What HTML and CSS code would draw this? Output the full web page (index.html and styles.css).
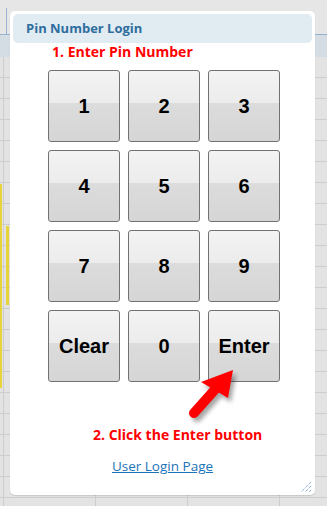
FILE: index.html
```html
<!DOCTYPE html>
<html lang="en">

<head>
    <meta charset="UTF-8">
    <meta name="viewport" content="width=device-width, initial-scale=1.0">
    <title>Pin Number Login</title>
    <link rel="stylesheet" href="styles.css">
</head>

<body>

    <div class="dialog">
        <div class="dialog-title">Pin Number Login</div>

        <div class="step step-one">1. Enter Pin Number</div>

        <div class="keypad">
            <button class="key">1</button>
            <button class="key">2</button>
            <button class="key">3</button>
            <button class="key">4</button>
            <button class="key">5</button>
            <button class="key">6</button>
            <button class="key">7</button>
            <button class="key">8</button>
            <button class="key">9</button>
            <button class="key">Clear</button>
            <button class="key">0</button>
            <button class="key">Enter</button>
        </div>

        <!-- arrow pointing at the enter key -->
        <svg class="arrow" width="70" height="62" viewBox="0 0 70 62">
            <line x1="39" y1="23" x2="14" y2="51" stroke="#ff0000" stroke-width="10" stroke-linecap="round" />
            <polygon points="53,8 21,20 48,36" fill="#ff0000" />
        </svg>

        <div class="step step-two">2. Click the Enter button</div>

        <div class="links">
            <a href="#" class="user-link">User Login Page</a>
        </div>

        <svg class="grip" width="12" height="12" viewBox="0 0 12 12">
            <path d="M11 1 L1 11 M11 5 L5 11 M11 9 L9 11" stroke="#5b8fd0" stroke-width="1" stroke-dasharray="1 1" />
        </svg>
    </div>

</body>

</html>
```

FILE: styles.css
```css
html,
body {
    margin: 0;
    padding: 0;
}

body {
    height: 506px;
    overflow: hidden;
    padding: 11px 12px 0 10px;
    box-sizing: border-box;
    font-family: "Open Sans", "Liberation Sans", sans-serif;
    background-color: #e3e3e3;
    background-image:
        linear-gradient(#e6d43a, #e6d43a),
        linear-gradient(#e6d43a, #e6d43a),
        linear-gradient(#98b3cf, #98b3cf),
        linear-gradient(#98b3cf, #98b3cf),
        linear-gradient(#e6e6e6, #e6e6e6),
        linear-gradient(#d4dce4, #d4dce4),
        linear-gradient(to right, #cdcdcd 1px, transparent 1px),
        linear-gradient(to bottom, transparent 20px, #cdcdcd 20px);
    background-repeat: no-repeat, no-repeat, no-repeat, no-repeat, no-repeat, no-repeat, repeat-x, repeat-y;
    background-position: 0 184px, 6px 226px, 0 34px, 6px 8px, 0 0, 0 35px, 3px 57px, 0 57px;
    background-size: 2px 204px, 3px 79px, 100% 1px, 1px 27px, 100% 34px, 100% 22px, 92px 100%, 100% 21px;
}

.dialog {
    position: relative;
    width: 305px;
    height: 484px;
    box-sizing: border-box;
    padding: 3px;
    background: #fff;
    border-radius: 5px;
    box-shadow: 0 1px 1px rgba(0, 0, 0, 0.12);
}

.dialog-title {
    height: 29px;
    line-height: 28px;
    padding-left: 13px;
    background: #e1ebf2;
    border-radius: 5px;
    color: #2e6e9e;
    font-size: 13px;
    font-weight: bold;
}

.step {
    color: #ff0000;
    font-size: 14px;
    font-weight: bold;
    line-height: 16px;
}

.step-one {
    margin-top: 1px;
    padding-left: 39px;
}

.keypad {
    display: grid;
    grid-template-columns: repeat(3, 72px);
    grid-auto-rows: 72px;
    gap: 8px;
    margin: 10px 0 0 35px;
}

.key {
    margin: 0;
    padding: 0;
    border: 1px solid #717171;
    border-radius: 3px;
    background: linear-gradient(#f3f3f3, #ececec 46%, #dcdcdc 46%, #d5d5d5);
    color: #000;
    font-family: "Liberation Sans", Arial, sans-serif;
    font-size: 20px;
    font-weight: bold;
}

.arrow {
    position: absolute;
    left: 170px;
    top: 351px;
    filter: drop-shadow(3px 4px 2px rgba(0, 0, 0, 0.35));
}

.step-two {
    margin-top: 45px;
    padding-left: 80px;
}

.links {
    margin-top: 15px;
    text-align: center;
    font-size: 13.5px;
    line-height: 16px;
}

.user-link {
    color: #1c73b8;
}

.grip {
    position: absolute;
    right: 3px;
    bottom: 2px;
}
```
